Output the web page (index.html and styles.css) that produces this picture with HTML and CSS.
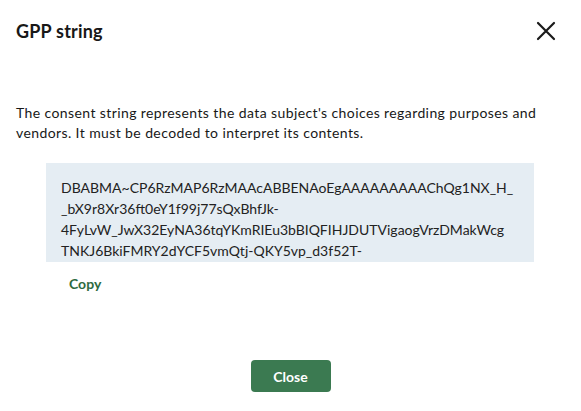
FILE: index.html
```
<!DOCTYPE html>
<html>
<head>
<meta charset="utf-8">
<link rel="stylesheet" href="styles.css">
</head>
<body>
<div class="modal">
  <div class="header">
    <h2 class="title">GPP string</h2>
    <button class="close-x" aria-label="Close">
      <svg width="20" height="20" viewBox="0 0 20 20"><path d="M2 2 L18 18 M18 2 L2 18" stroke="#1a1a1a" stroke-width="2.2" stroke-linecap="round" fill="none"/></svg>
    </button>
  </div>
  <p class="desc">The consent string represents the data subject's choices regarding purposes and vendors. It must be decoded to interpret its contents.</p>
  <div class="string-box">
    <div class="string">DBABMA~CP6RzMAP6RzMAAcABBENAoEgAAAAAAAAAChQg1NX_H_<br>_bX9r8Xr36ft0eY1f99j77sQxBhfJk-<br>4FyLvW_JwX32EyNA36tqYKmRIEu3bBIQFIHJDUTVigaogVrzDMakWcg<br>TNKJ6BkiFMRY2dYCF5vmQtj-QKY5vp_d3f52T-</div>
  </div>
  <div class="copy-row"><button class="copy">Copy</button></div>
  <div class="footer"><button class="btn-close">Close</button></div>
</div>
</body>
</html>
```
FILE: styles.css
```
* { box-sizing: border-box; }
html, body { margin: 0; padding: 0; background: #fff; }
body {
  font-family: Lato, "Open Sans", sans-serif;
  color: #181818;
  width: 581px;
  height: 411px;
  overflow: hidden;
}
.modal { padding: 0 16px; }
.header {
  display: flex;
  justify-content: space-between;
  align-items: center;
  height: 62px;
}
.title {
  margin: 0;
  font-size: 18px;
  font-weight: 700;
  letter-spacing: 0.2px;
}
.close-x {
  border: 0;
  background: none;
  padding: 0;
  margin-right: 9px;
  width: 20px;
  height: 20px;
  display: flex;
}
.desc {
  margin: 41px 0 0;
  font-size: 14px;
  line-height: 20px;
  letter-spacing: 0.4px;
}
.string-box {
  margin: 20px 31px 0 30px;
  background: #e5edf3;
  height: 99px;
  overflow: hidden;
  padding: 14px 15px 0;
}
.string {
  font-size: 14px;
  line-height: 21px;
  color: #222;
}
.copy-row { padding: 11px 0 0 46px; }
.copy {
  border: 0;
  background: none;
  padding: 0 7px;
  font-family: inherit;
  font-size: 14px;
  font-weight: 700;
  color: #2e6a3f;
  line-height: 20px;
}
.footer {
  display: flex;
  justify-content: center;
  margin-top: 66px;
}
.btn-close {
  width: 80px;
  height: 32px;
  border: 0;
  border-radius: 4px;
  background: #3b7a51;
  color: #fff;
  font-family: inherit;
  font-size: 14px;
  font-weight: 700;
}
```
